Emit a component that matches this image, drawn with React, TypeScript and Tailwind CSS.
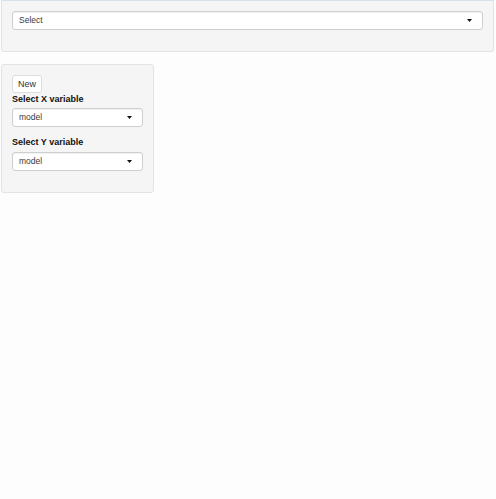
function Caret() {
  return (
    <svg width="5" height="3" viewBox="0 0 5 3" className="block">
      <path d="M0 0h5L2.5 3z" fill="#111" />
    </svg>
  );
}

function SelectBox({ value }: { value: string }) {
  return (
    <div className="flex h-[19px] items-center justify-between rounded-[3px] border border-[#cfcfcf] bg-white pl-[6px] pr-[10px] shadow-[inset_0_1px_1px_rgba(0,0,0,0.06)]">
      <span className="text-[8.5px] leading-none text-[#3a3a3a]">{value}</span>
      <Caret />
    </div>
  );
}

export default function App() {
  return (
    <div className="min-h-screen bg-[#fdfdfd] font-['Liberation_Sans',Arial,sans-serif] text-[#333]">
      <div className="ml-px h-[52px] w-[493px] rounded-b-[3px] border border-[#e3e3e3] border-t-[#d6e2ee] bg-[#f5f5f5] px-[10px] pt-[10px]">
        <SelectBox value="Select" />
      </div>

      <div className="ml-px mt-[12px] h-[129px] w-[153px] rounded-[3px] border border-[#e3e3e3] bg-[#f5f5f5] px-[10px] pt-[10px]">
        <button className="block h-[18px] w-[30px] rounded-[3px] border border-[#dcdcdc] bg-white text-[9px] leading-none text-[#333]">
          New
        </button>
        <div className="mb-[4px] pt-px text-[9px] font-bold leading-[10px] text-[#111]">
          Select X variable
        </div>
        <SelectBox value="model" />
        <div className="mb-[4px] mt-[10px] text-[9px] font-bold leading-[11px] text-[#111]">
          Select Y variable
        </div>
        <SelectBox value="model" />
      </div>
    </div>
  );
}
